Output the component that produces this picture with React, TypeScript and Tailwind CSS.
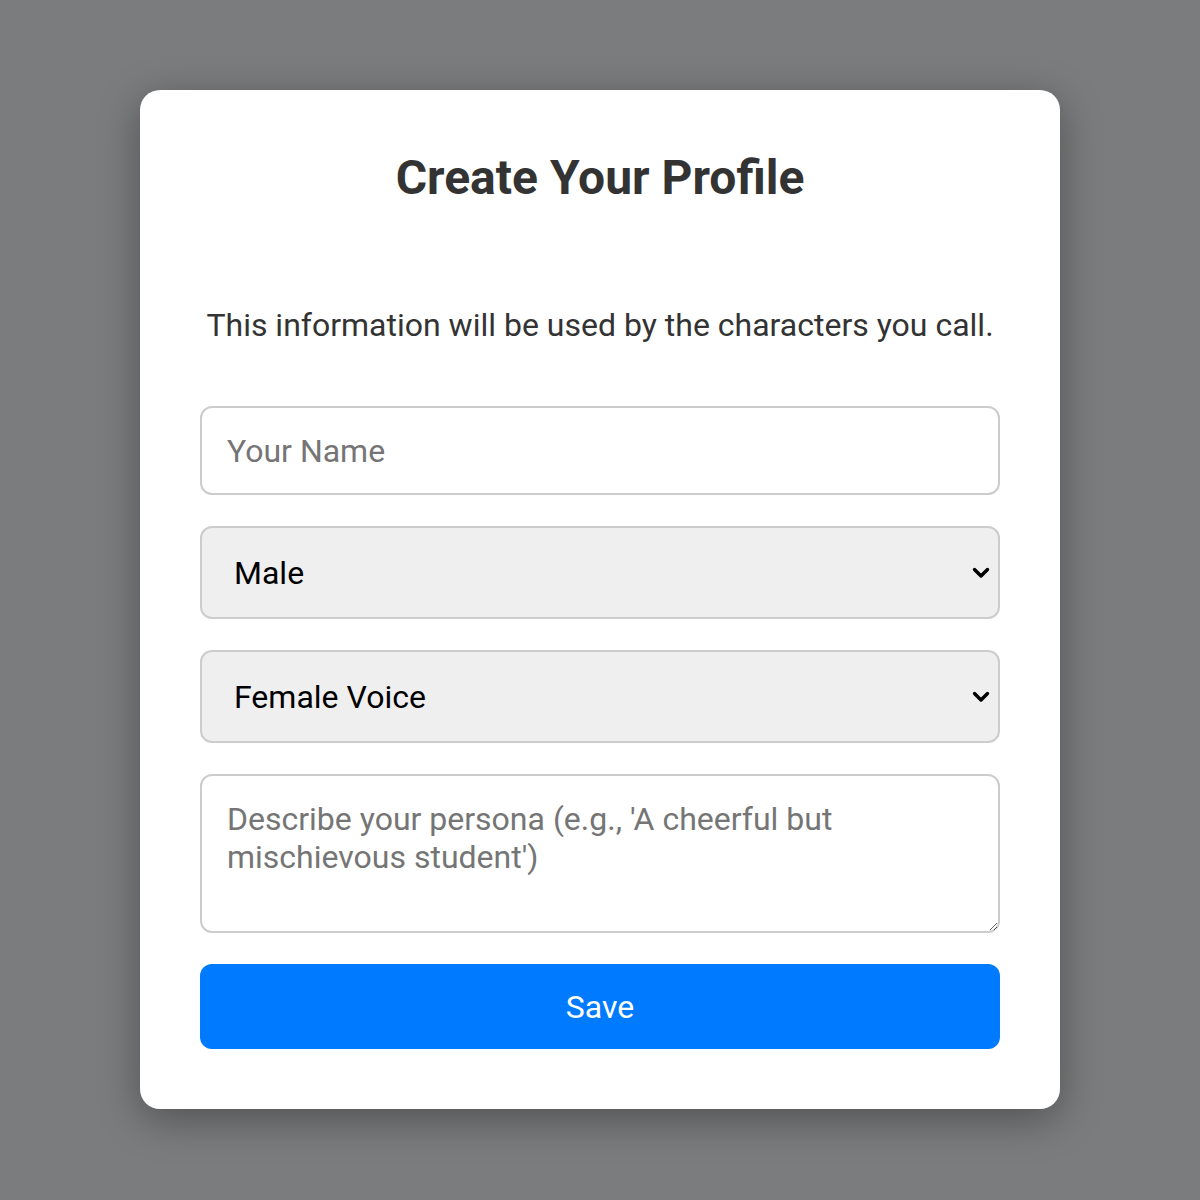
import { useState } from 'react';

export default function App() {
  const [name, setName] = useState('');
  const [gender, setGender] = useState('male');
  const [voice, setVoice] = useState('female');
  const [persona, setPersona] = useState('');

  return (
    <div className="min-h-[1200px] w-full bg-[#7b7c7d] flex items-start justify-center pt-[90px] font-['Roboto',sans-serif]">
      <div className="w-[920px] bg-white rounded-[20px] shadow-[0_10px_40px_rgba(0,0,0,0.35)] px-[60px] pt-[60px] pb-[60px]">
        <h1 className="text-center text-[48px] leading-[56px] font-bold text-[#333333]">Create Your Profile</h1>

        <p className="mt-[99px] text-center text-[32px] leading-[40px] text-[#333333]">
          This information will be used by the characters you call.
        </p>

        <div className="mt-[61px] flex flex-col gap-[31px]">
          <input
            type="text"
            value={name}
            onChange={(e) => setName(e.target.value)}
            placeholder="Your Name"
            className="h-[89px] w-full rounded-[12px] border-2 border-[#cccccc] bg-white px-[25px] text-[32px] text-black placeholder:text-[#757575] outline-none"
          />

          <div className="relative">
            <select
              value={gender}
              onChange={(e) => setGender(e.target.value)}
              className="h-[93px] w-full appearance-none rounded-[12px] border-2 border-[#cccccc] bg-[#efefef] px-[32px] text-[32px] text-black outline-none"
            >
              <option value="male">Male</option>
              <option value="female">Female</option>
              <option value="other">Other</option>
            </select>
            <Chevron />
          </div>

          <div className="relative">
            <select
              value={voice}
              onChange={(e) => setVoice(e.target.value)}
              className="h-[93px] w-full appearance-none rounded-[12px] border-2 border-[#cccccc] bg-[#efefef] px-[32px] text-[32px] text-black outline-none"
            >
              <option value="female">Female Voice</option>
              <option value="male">Male Voice</option>
            </select>
            <Chevron />
          </div>

          <textarea
            value={persona}
            onChange={(e) => setPersona(e.target.value)}
            placeholder="Describe your persona (e.g., 'A cheerful but mischievous student')"
            className="block h-[159px] w-full rounded-[12px] border-2 border-[#cccccc] bg-white px-[25px] py-[24px] text-[32px] leading-[38px] text-black placeholder:text-[#757575] outline-none"
          />

          <button className="h-[85px] w-full rounded-[12px] bg-[#007bff] text-[32px] text-white">
            Save
          </button>
        </div>
      </div>
    </div>
  );
}

function Chevron() {
  return (
    <svg
      className="pointer-events-none absolute right-[10px] top-1/2 -translate-y-1/2"
      width="18"
      height="12"
      viewBox="0 0 18 12"
      fill="none"
    >
      <path d="M2.5 2.5 L9 9 L15.5 2.5" stroke="#000" strokeWidth="3.4" strokeLinecap="round" strokeLinejoin="round" />
    </svg>
  );
}
